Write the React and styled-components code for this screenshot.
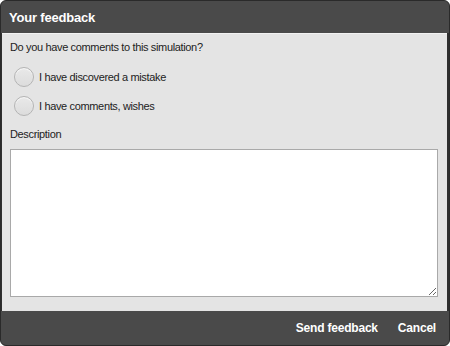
import React from 'react';
import styled, { createGlobalStyle } from 'styled-components';

const Global = createGlobalStyle`
  html, body {
    margin: 0;
    padding: 0;
    background: #fff;
  }
  * {
    box-sizing: border-box;
  }
`;

const Dialog = styled.div`
  width: 450px;
  height: 346px;
  display: flex;
  flex-direction: column;
  background: #2f2f2f;
  border: 1px solid #2a2a2a;
  border-radius: 6px;
  overflow: hidden;
  font-family: "Liberation Sans", Arial, sans-serif;
`;

const Header = styled.div`
  height: 32px;
  display: flex;
  align-items: center;
  padding: 0 8px;
  background: #4a4a4a;
  color: #fff;
  font-size: 13px;
  letter-spacing: -0.2px;
  font-weight: bold;
`;

const Body = styled.div`
  flex: 1;
  margin: 0 2px 0 1px;
  display: flex;
  flex-direction: column;
  padding: 6px 8px 14px 8px;
  background: #e4e4e4;
  border-top: 1px solid #f2f2f2;
  color: #222;
  font-size: 11px;
  letter-spacing: -0.35px;
`;

const Question = styled.div`
  line-height: 14px;
`;

const Options = styled.div`
  display: flex;
  flex-direction: column;
  gap: 9px;
  margin-top: 13px;
  padding-left: 4px;
`;

const Option = styled.label`
  display: flex;
  align-items: center;
  gap: 5px;
  height: 20px;
  cursor: pointer;
`;

const Radio = styled.span`
  width: 20px;
  height: 20px;
  border-radius: 50%;
  border: 1px solid #b4b4b4;
  background: linear-gradient(#e9e9e9, #dcdcdc);
  box-shadow: inset 0 1px 1px rgba(255, 255, 255, 0.7);
`;

const Label = styled.div`
  margin-top: 11px;
  line-height: 14px;
`;

const Area = styled.textarea`
  margin-top: 8px;
  flex: 1;
  width: 428px;
  border: 1px solid #a9a9a9;
  background: #fff;
  resize: both;
  font-family: inherit;
  font-size: 12px;
  outline: none;
`;

const Footer = styled.div`
  height: 34px;
  display: flex;
  align-items: center;
  justify-content: flex-end;
  gap: 20px;
  padding: 0 13px;
  background: #4a4a4a;
`;

const Action = styled.button`
  background: none;
  border: none;
  padding: 0;
  color: #fff;
  font-family: inherit;
  font-size: 12px;
  letter-spacing: -0.2px;
  font-weight: bold;
  cursor: pointer;
`;

export default function App() {
  return (
    <>
      <Global />
      <Dialog>
        <Header>Your feedback</Header>
        <Body>
          <Question>Do you have comments to this simulation?</Question>
          <Options>
            <Option>
              <Radio />
              I have discovered a mistake
            </Option>
            <Option>
              <Radio />
              I have comments, wishes
            </Option>
          </Options>
          <Label>Description</Label>
          <Area />
        </Body>
        <Footer>
          <Action>Send feedback</Action>
          <Action>Cancel</Action>
        </Footer>
      </Dialog>
    </>
  );
}
